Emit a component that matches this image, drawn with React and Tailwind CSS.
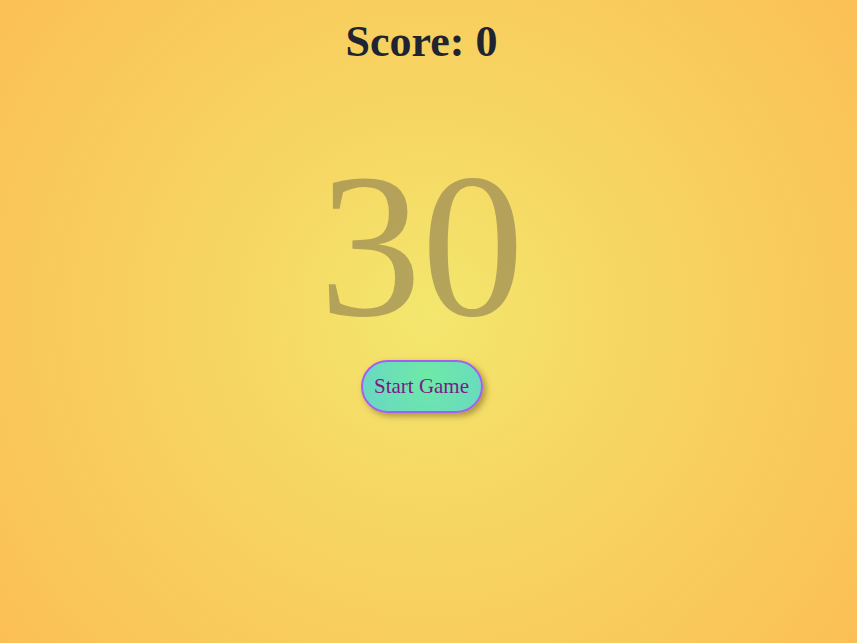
export default function App() {
  return (
    <div className="min-h-screen w-full flex flex-col items-center pr-[14px] bg-[radial-gradient(circle_at_50%_49%,#f3e76e_0%,#f6d763_35%,#fbbf56_100%)] font-['Liberation_Serif',serif]">
      <h1 className="mt-[17px] text-[44px] leading-[50px] font-bold text-[#1f2430]">Score: 0</h1>
      <div className="mt-[79px] text-[205px] leading-[200px] text-[#8a7a50]/60">30</div>
      <button className="mt-[14px] w-[122px] h-[53px] rounded-full border-2 border-[#a45ef0] bg-[radial-gradient(circle_at_55%_30%,#6eeaa6_0%,#68d6c6_100%)] text-[21px] text-[#7b1a86] shadow-[3px_3px_6px_rgba(120,100,30,0.6)]">
        Start Game
      </button>
    </div>
  );
}
